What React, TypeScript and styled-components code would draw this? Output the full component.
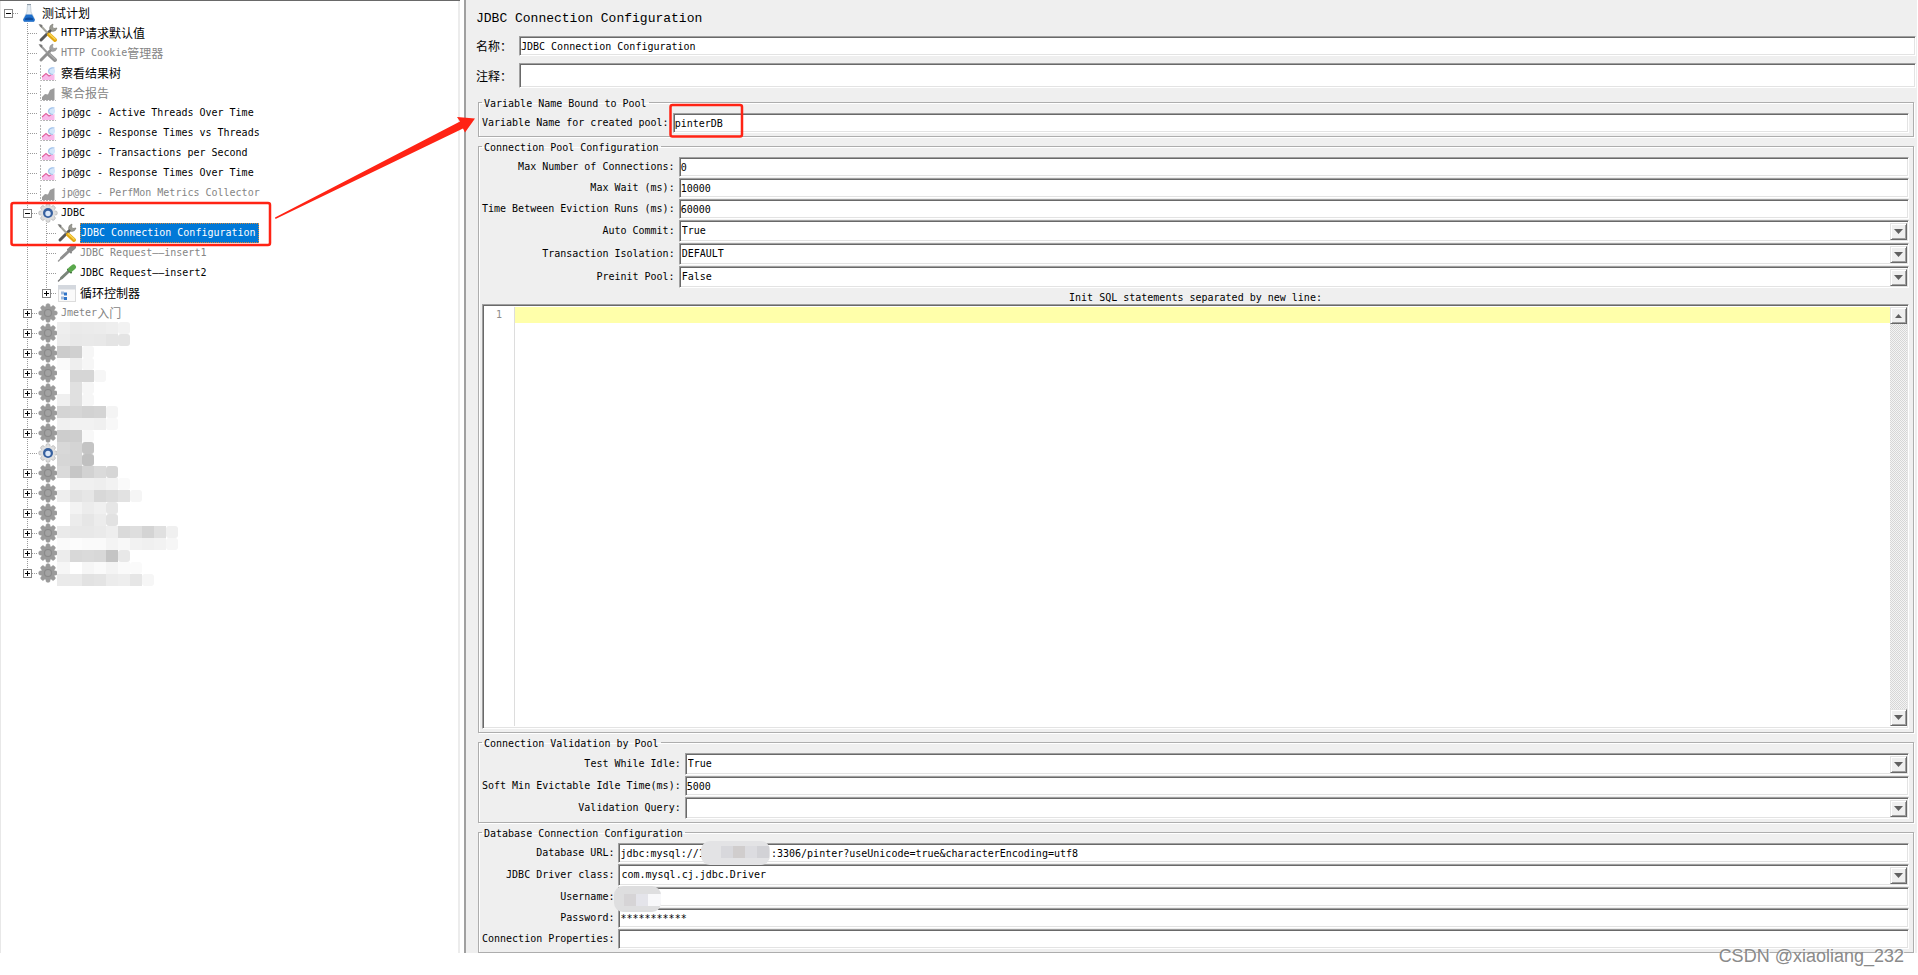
import React from "react";
import styled, { createGlobalStyle, css } from "styled-components";

const face = "#efefef";
const annotation = "#ff2314";

const GlobalStyle = createGlobalStyle`
  *, *::before, *::after { box-sizing: border-box; }
  body {
    margin: 0;
    background: #fff;
    color: #000;
    font: 10px/12px "DejaVu Sans Mono", "Noto Sans CJK SC", monospace;
  }
  input, select, textarea, button {
    font: inherit;
    color: inherit;
    margin: 0;
    border-radius: 0;
    outline: 0;
  }
`;

const Page = styled.div`
  position: relative;
  display: flex;
  min-height: 100vh;
  padding-bottom: 22px;
  background: #fff;
`;

/* ---------- tree ---------- */

const TreePanel = styled.nav`
  position: relative;
  flex: 0 0 460px;
  padding-top: 2px;
  border-top: 1px solid #696969;
  box-shadow: inset 1px 0 #e8e8e8, inset -2px 0 #ececec;
`;

const TreeList = styled.ul`
  margin: 0;
  padding: 0;
  list-style: none;
`;

const TreeRow = styled.li`
  display: flex;
  align-items: center;
  height: 20px;
`;

const IconSlot = styled.span`
  display: flex;
  justify-content: center;
  width: 20px;
  margin-right: 3px;
`;

const NodeLabel = styled.a<{ $off?: boolean; $selected?: boolean }>`
  display: flex;
  align-items: center;
  height: 20px;
  color: ${(p) => (p.$off ? "#858585" : "#000")};
  text-decoration: none;
  white-space: pre;
  ${(p) =>
    p.$selected &&
    css`
      background: #0078d7;
      color: #fff;
      outline: 1px dotted #d98a3a;
      outline-offset: -1px;
      padding: 0 3px 0 1px;
    `}
`;

const Han = styled.span`
  font: 12px/16px "Noto Sans CJK SC", sans-serif;
`;

const mixed = (text: string) =>
  text
    .split(/([\u4e00-\u9fff\uff1a]+)/)
    .filter(Boolean)
    .map((part, i) => (/[\u4e00-\u9fff]/.test(part) ? <Han key={i}>{part}</Han> : <span key={i}>{part}</span>));

type Mark = "plus" | "minus" | "none";

const Guide = ({ mark, last, root }: { mark: Mark; last?: boolean; root?: boolean }) => (
  <svg width="19" height="20" viewBox="0 0 19 20" shapeRendering="crispEdges" aria-hidden="true">
    <g stroke="#9a9a9a" strokeDasharray="1 1">
      {!root && <path d={last ? "M8.5 0V10" : "M8.5 0V20"} />}
      <path d="M9 10.5H19" />
    </g>
    {mark !== "none" && (
      <g>
        <rect x="4.5" y="6.5" width="8" height="8" fill="#fff" stroke="#848484" />
        <path d={mark === "plus" ? "M6 10.5H11M8.5 8V13" : "M6 10.5H11"} stroke="#000" />
      </g>
    )}
  </svg>
);

const ParentLine = () => (
  <svg width="19" height="20" aria-hidden="true" shapeRendering="crispEdges">
    <path d="M8.5 0V20" stroke="#9a9a9a" strokeDasharray="1 1" />
  </svg>
);

const Spacer = styled.span`
  width: 19px;
`;

const Flask = () => (
  <svg width="14" height="20" viewBox="0 0 14 20" aria-hidden="true">
    <path d="M5.5 2L5 9L1.5 16Q1 18.5 3 18.5H11Q13 18.5 12.5 16L9 9L8.5 2Z" fill="#e4ecf3" stroke="#c9d3dc" />
    <path d="M4 11.5H10L12.6 16.2Q13 18.8 11 18.8H3Q1 18.8 1.4 16.2Z" fill="#1f6fcb" />
    <path d="M3 15.5Q7 13.5 11 15.5L11 17H3Z" fill="#0d4c9e" />
    <path d="M5 1.5H9" stroke="#8e9aa6" />
  </svg>
);

const Tools = ({ off }: { off?: boolean }) => (
  <svg width="20" height="20" viewBox="0 0 20 20" fill="none" aria-hidden="true">
    <path d="M3 17L13.5 6.5" stroke={off ? "#8f8f8f" : "#595959"} strokeWidth="3" strokeLinecap="round" />
    <path
      d="M13 7L11.500 5.500Q11.500 2 15 1L14.500 4L16 5.500L19 5Q18 8.500 14.500 8.500Z"
      fill={off ? "#a2a2a2" : "#9b9b93"}
      stroke={off ? "#8f8f8f" : "#77776f"}
      strokeWidth=".6"
    />
    <path d="M2 2L9.5 10" stroke={off ? "#9b9b9b" : "#a5a59d"} strokeWidth="2" />
    <path d="M.5 1L4.500 2L3.500 5Z" fill="#777" />
    <path d="M11 11.500L17 17" stroke={off ? "#8f8f8f" : "#e3a80f"} strokeWidth="4" strokeLinecap="round" />
    <path d="M11 10.500L17.500 16.500" stroke={off ? "#acacac" : "#f8d75c"} strokeWidth="1.200" />
  </svg>
);

const Graph = ({ off }: { off?: boolean }) => (
  <svg width="16" height="18" viewBox="0 0 16 18" fill="none" aria-hidden="true">
    <path d="M.5 1V16.500H16" stroke="#b5b5b5" strokeDasharray="2 1" />
    {off ? (
      <path d="M2 16V13L5 10L8 10.500L10 6L14.500 4V16Z" fill="#9c9c9c" />
    ) : (
      <>
        <path d="M2 16V13L6 10L9 12L14.500 10V16Z" fill="#f9b9ea" />
        <path d="M2 13L6 9.500L9 12L11.500 10.500" stroke="#e0609f" strokeWidth="1.100" />
        <circle cx="11.500" cy="7" r="3.600" fill="#d3e6fa" />
        <path d="M14.500 4Q10 3 8.500 7Q9 10 13 10.500" stroke="#9fc0ea" strokeWidth="1.100" />
      </>
    )}
  </svg>
);

const teeth = [0, 45, 90, 135, 180, 225, 270, 315];

const Gear = ({ off }: { off?: boolean }) => (
  <svg width="20" height="20" viewBox="0 0 20 20" aria-hidden="true">
    <g fill={off ? "#9b9b9b" : "#dcdcdc"} stroke={off ? "#9b9b9b" : "#a9a9a9"} strokeWidth=".6">
      {teeth.map((a) => (
        <rect key={a} x="8" y=".8" width="4" height="5" rx="1.500" transform={`rotate(${a} 10 10)`} />
      ))}
    </g>
    <circle cx="10" cy="10" r="7" fill={off ? "#9b9b9b" : "#dfdfdf"} />
    {off ? (
      <circle cx="10" cy="10" r="3.500" fill="#a3a3a3" stroke="#8a8a8a" strokeWidth="1.200" />
    ) : (
      <>
        <circle cx="10" cy="10" r="5" fill="#36609f" />
        <circle cx="10" cy="10.500" r="2.700" fill="#dbe7f7" />
      </>
    )}
  </svg>
);

const Dropper = ({ off }: { off?: boolean }) => (
  <svg width="20" height="20" viewBox="0 0 20 20" fill="none" strokeLinecap="round" aria-hidden="true">
    <path d="M1.500 18L6 13.500" stroke={off ? "#9a9a9a" : "#777"} strokeWidth="1.500" />
    <path d="M4.500 15L12 8" stroke={off ? "#8f8f8f" : "#7b857b"} strokeWidth="3" />
    <path d="M11 6.500L14 9.500" stroke={off ? "#888" : "#3f6f39"} strokeWidth="2" />
    <path d="M13.500 6.500L16.500 4" stroke={off ? "#8a8a8a" : "#5aa84c"} strokeWidth="5" />
  </svg>
);

const Controller = () => (
  <svg width="20" height="20" viewBox="0 0 20 20" aria-hidden="true">
    <rect x="1.500" y="2.500" width="17" height="16" fill="#fafafa" stroke="#dcdcdc" />
    <path d="M1 2H19V6.500H1Z" fill="#d4d8de" />
    <rect x="4" y="8.500" width="3" height="3" fill="#9db9dc" />
    <rect x="7" y="9.500" width="3" height="3" fill="#2f74c8" />
    <rect x="4" y="13.500" width="3" height="3" fill="#9db9dc" />
    <rect x="7" y="14" width="3" height="3" fill="#2f74c8" />
  </svg>
);

const icons = { flask: Flask, tools: Tools, graph: Graph, gear: Gear, dropper: Dropper, controller: Controller };

type TreeNode = {
  text: string;
  icon: keyof typeof icons;
  level: number;
  mark?: Mark;
  off?: boolean;
  selected?: boolean;
  last?: boolean;
};

const hidden = (mark: Mark, off: boolean, last = false): TreeNode => ({ text: "", icon: "gear", level: 1, mark, off, last });

const nodes: TreeNode[] = [
  { text: "测试计划", icon: "flask", level: 0, mark: "minus" },
  { text: "HTTP请求默认值", icon: "tools", level: 1 },
  { text: "HTTP Cookie管理器", icon: "tools", level: 1, off: true },
  { text: "察看结果树", icon: "graph", level: 1 },
  { text: "聚合报告", icon: "graph", level: 1, off: true },
  { text: "jp@gc - Active Threads Over Time", icon: "graph", level: 1 },
  { text: "jp@gc - Response Times vs Threads", icon: "graph", level: 1 },
  { text: "jp@gc - Transactions per Second", icon: "graph", level: 1 },
  { text: "jp@gc - Response Times Over Time", icon: "graph", level: 1 },
  { text: "jp@gc - PerfMon Metrics Collector", icon: "graph", level: 1, off: true },
  { text: "JDBC", icon: "gear", level: 1, mark: "minus" },
  { text: "JDBC Connection Configuration", icon: "tools", level: 2, selected: true },
  { text: "JDBC Request——insert1", icon: "dropper", level: 2, off: true },
  { text: "JDBC Request——insert2", icon: "dropper", level: 2 },
  { text: "循环控制器", icon: "controller", level: 2, mark: "plus", last: true },
  { text: "Jmeter入门", icon: "gear", level: 1, mark: "plus", off: true },
  hidden("plus", true),
  hidden("plus", true),
  hidden("plus", true),
  hidden("plus", true),
  hidden("plus", true),
  hidden("plus", true),
  hidden("none", false),
  hidden("plus", true),
  hidden("plus", true),
  hidden("plus", true),
  hidden("plus", true),
  hidden("plus", true),
  hidden("plus", true, true),
];

/* Grey levels of the 12px blocks that hide node names, one list per band. */
const bands: number[][] = [
  [238, 234, 235, 236, 238, 242],
  [236, 232, 233, 232, 228, 228],
  [204, 208, 246],
  [250, 238, 246],
  [255, 214, 214, 246],
  [255, 224, 246],
  [240, 224, 246],
  [212, 214, 210, 212, 244],
  [240, 242, 242, 240, 248],
  [205, 206, 248],
  [216, 212, 196],
  [214, 212, 192],
  [218, 198, 210, 218, 214],
  [255, 240, 240, 238, 242, 250],
  [238, 226, 230, 216, 220, 226, 245],
  [255, 243, 236, 240, 230],
  [255, 236, 230, 236, 226],
  [234, 232, 232, 234, 238, 218, 222, 212, 224, 240],
  [250, 252, 250, 250, 244, 248, 242, 240, 242, 246],
  [236, 216, 218, 216, 196, 232],
  [246, 255, 246, 250, 244, 250, 250],
  [234, 234, 226, 228, 236, 238, 230, 246],
];

const TreeMosaic = styled.svg`
  position: absolute;
  left: 54px;
  top: 321px;
`;

/* ---------- right-hand form ---------- */

const Main = styled.main`
  flex: 1;
  min-width: 0;
  display: flex;
  flex-direction: column;
  margin-left: 4px;
  padding: 11px 2px 0 10px;
  border-left: 2px solid #a0a0a0;
  background: ${face};
  box-shadow: inset -1px 0 #fff;
`;

const Title = styled.h1`
  margin: 0 0 9px;
  font: 400 13px/16px "Liberation Mono", monospace;
`;

const HeaderRow = styled.div`
  display: grid;
  grid-template-columns: 39px 1fr;
  align-items: center;
  column-gap: 4px;
  margin-bottom: 7px;
`;

const bevel = css`
  border: 1px solid;
  border-color: #a0a0a0 #fff #fff #a0a0a0;
  box-shadow: inset 1px 1px #696969, inset -1px -1px #e3e3e3;
  background: #fff;
`;

const TextInput = styled.input<{ $tall?: boolean }>`
  ${bevel}
  width: 100%;
  min-width: 0;
  height: ${(p) => (p.$tall ? 25 : 20)}px;
  padding: 0 1px;
`;

const Groups = styled.div`
  flex: 1;
  display: flex;
  flex-direction: column;
  gap: 2px;
  padding: 0 2px 0 2px;
`;

const Group = styled.fieldset<{ $grow?: boolean }>`
  flex: ${(p) => (p.$grow ? "1 0 auto" : "0 0 auto")};
  display: flex;
  flex-direction: column;
  min-width: 0;
  margin: 0;
  padding: 3px 4px 3px 3px;
  border: 1px solid #adadad;
  box-shadow: 1px 1px #fff, inset 1px 1px #fff;
`;

const Legend = styled.legend`
  padding: 3px 2px 0;
  line-height: 12px;
`;

const Fields = styled.div`
  display: grid;
  grid-template-columns: max-content 1fr;
  align-items: center;
  column-gap: 4px;
  row-gap: 1px;
`;

const FieldLabel = styled.label`
  text-align: right;
  white-space: pre;
`;

const Combo = styled.div`
  ${bevel}
  display: flex;
  height: 22px;
  padding: 2px 1px 2px 2px;
`;

const ComboSelect = styled.select`
  flex: 1;
  min-width: 0;
  padding: 0;
  border: 0;
  background: transparent;
  appearance: none;
`;

const BevelButton = styled.button`
  display: flex;
  align-items: center;
  justify-content: center;
  flex: none;
  width: 17px;
  height: 17px;
  padding: 0;
  border: 1px solid;
  border-color: #e3e3e3 #696969 #696969 #e3e3e3;
  background: ${face};
  box-shadow: inset 1px 1px #fff, inset -1px -1px #a0a0a0;
`;

const Arrow = ({ up }: { up?: boolean }) => (
  <svg width="9" height="5" viewBox="0 0 9 5" aria-hidden="true">
    <path d={up ? "M1 5L4.500 1L8 5Z" : "M0 0H9L4.500 5Z"} fill="#606060" />
  </svg>
);

const Covered = styled.div`
  position: relative;
`;

const FieldMosaic = styled.svg<{ $left: number; $top: number }>`
  position: absolute;
  left: ${(p) => p.$left}px;
  top: ${(p) => p.$top}px;
  border-radius: 9px;
`;

const EditorLabel = styled.label`
  padding-top: 3px;
  line-height: 13px;
  text-align: center;
`;

const Editor = styled.div`
  ${bevel}
  flex: 1;
  display: flex;
  min-height: 200px;
  padding: 2px 1px 2px 2px;
`;

const Gutter = styled.div`
  width: 30px;
  padding-right: 12px;
  border-right: 1px solid #ddd;
  color: #8c8c8c;
  line-height: 15px;
  text-align: right;
`;

const Code = styled.textarea`
  flex: 1;
  padding: 0 2px;
  border: 0;
  resize: none;
  line-height: 16px;
  background: linear-gradient(#ffffaa, #ffffaa) 0 0 / 100% 16px no-repeat #fff;
`;

const ScrollTrack = styled.div`
  display: flex;
  flex-direction: column;
  justify-content: space-between;
  background: repeating-conic-gradient(#d6d6d6 0 25%, #f4f4f4 0 50%) 0 0 / 2px 2px;
`;

const Annotations = styled.svg`
  position: absolute;
  left: 0;
  top: 0;
  pointer-events: none;
`;

const Watermark = styled.div`
  position: absolute;
  right: 14px;
  bottom: 8px;
  color: #8a8a8a;
  font: 18px/22px "Liberation Sans", sans-serif;
  text-shadow: 1px 1px #fff;
`;

type FieldProps = { id: string; label: string; value?: string };

const TextField = ({ id, label, value = "" }: FieldProps) => (
  <>
    <FieldLabel htmlFor={id}>{label}</FieldLabel>
    <TextInput id={id} defaultValue={value} spellCheck={false} />
  </>
);

const ComboField = ({ id, label, value = "" }: FieldProps) => (
  <>
    <FieldLabel htmlFor={id}>{label}</FieldLabel>
    <Combo>
      <ComboSelect id={id} defaultValue={value}>
        <option>{value}</option>
      </ComboSelect>
      <BevelButton type="button" tabIndex={-1} aria-label={`Open ${label}`}>
        <Arrow />
      </BevelButton>
    </Combo>
  </>
);

const Tree = () => (
  <TreePanel>
    <TreeList>
      {nodes.map((n, i) => {
        const Icon = icons[n.icon];
        return (
          <TreeRow key={i}>
            {n.level > 0 && <Spacer />}
            {n.level > 1 && <ParentLine />}
            <Guide mark={n.mark ?? "none"} last={n.last} root={n.level === 0} />
            <IconSlot>
              <Icon off={n.off} />
            </IconSlot>
            {n.text && (
              <NodeLabel href="#" $off={n.off} $selected={n.selected}>
                {mixed(n.text)}
              </NodeLabel>
            )}
          </TreeRow>
        );
      })}
    </TreeList>
    <TreeMosaic width="130" height="264" aria-hidden="true">
      {bands.map((band, row) =>
        band.map((v, col) => (
          <rect
            key={`${row}-${col}`}
            x={col === 0 ? 3 : 4 + col * 12}
            y={row * 12}
            width={col === 0 ? 13 : 12}
            height="12"
            rx={col === band.length - 1 ? 3 : 0}
            fill={`rgb(${v},${v},${v})`}
          />
        ))
      )}
    </TreeMosaic>
  </TreePanel>
);

export default function App() {
  return (
    <>
      <GlobalStyle />
      <Page>
        <Tree />
        <Main>
          <Title>JDBC Connection Configuration</Title>
          <HeaderRow>
            <label htmlFor="name">{mixed("名称：")}</label>
            <TextInput id="name" defaultValue="JDBC Connection Configuration" />
          </HeaderRow>
          <HeaderRow>
            <label htmlFor="comment">{mixed("注释：")}</label>
            <TextInput id="comment" $tall />
          </HeaderRow>
          <Groups>
            <Group>
              <Legend>Variable Name Bound to Pool</Legend>
              <Fields>
                <TextField id="pool" label="Variable Name for created pool:" value="pinterDB" />
              </Fields>
            </Group>
            <Group $grow>
              <Legend>Connection Pool Configuration</Legend>
              <Fields>
                <TextField id="max" label="Max Number of Connections:" value="0" />
                <TextField id="wait" label="Max Wait (ms):" value="10000" />
                <TextField id="evict" label="Time Between Eviction Runs (ms):" value="60000" />
                <ComboField id="commit" label="Auto Commit:" value="True" />
                <ComboField id="isolation" label="Transaction Isolation:" value="DEFAULT" />
                <ComboField id="preinit" label="Preinit Pool:" value="False" />
              </Fields>
              <EditorLabel htmlFor="sql">Init SQL statements separated by new line:</EditorLabel>
              <Editor>
                <Gutter>1</Gutter>
                <Code id="sql" spellCheck={false} />
                <ScrollTrack>
                  <BevelButton type="button" aria-label="Scroll up">
                    <Arrow up />
                  </BevelButton>
                  <BevelButton type="button" aria-label="Scroll down">
                    <Arrow />
                  </BevelButton>
                </ScrollTrack>
              </Editor>
            </Group>
            <Group>
              <Legend>Connection Validation by Pool</Legend>
              <Fields>
                <ComboField id="idle" label="Test While Idle:" value="True" />
                <TextField id="soft" label="Soft Min Evictable Idle Time(ms):" value="5000" />
                <ComboField id="query" label="Validation Query:" />
              </Fields>
            </Group>
            <Group>
              <Legend>Database Connection Configuration</Legend>
              <Fields>
                <FieldLabel htmlFor="url">Database URL:</FieldLabel>
                <Covered>
                  <TextInput
                    id="url"
                    spellCheck={false}
                    defaultValue={"jdbc:mysql://1" + " ".repeat(11) + ":3306/pinter?useUnicode=true&characterEncoding=utf8"}
                  />
                  <FieldMosaic $left={83} $top={-2} width="69" height="24" aria-hidden="true">
                    <rect width="69" height="24" fill="#e3e3e5" />
                    <rect x="20" y="5" width="12" height="12" fill="#d8d8dc" />
                    <rect x="32" y="5" width="12" height="12" fill="#d0cdcd" />
                    <rect x="44" y="5" width="12" height="12" fill="#dcdce0" />
                    <rect x="56" y="5" width="12" height="12" fill="#d2d2d6" />
                  </FieldMosaic>
                </Covered>
                <ComboField id="driver" label="JDBC Driver class:" value="com.mysql.cj.jdbc.Driver" />
                <FieldLabel htmlFor="user">Username:</FieldLabel>
                <Covered>
                  <TextInput id="user" />
                  <FieldMosaic $left={-4} $top={-1} width="47" height="26" aria-hidden="true">
                    <rect width="47" height="26" fill="#dededf" />
                    <rect x="10" y="8" width="12" height="12" fill="#d6d4d6" />
                    <rect x="22" y="8" width="12" height="12" fill="#e4e4ea" />
                    <rect x="34" y="8" width="13" height="12" fill="#f8f8fa" />
                  </FieldMosaic>
                </Covered>
                <TextField id="password" label="Password:" value="***********" />
                <TextField id="props" label="Connection Properties:" />
              </Fields>
            </Group>
          </Groups>
        </Main>
        <Annotations width="760" height="260" aria-hidden="true">
          <g fill="none" stroke={annotation} strokeWidth="2.500">
            <rect x="11.500" y="203" width="258.500" height="42" rx="2" />
            <rect x="670.500" y="105" width="71.500" height="31.500" rx="2" />
          </g>
          <path d="M275 217.500L460 121.500L457 117L475 118.500L465 132.500L463 128.500L275.500 219Z" fill={annotation} />
        </Annotations>
        <Watermark>CSDN @xiaoliang_232</Watermark>
      </Page>
    </>
  );
}
